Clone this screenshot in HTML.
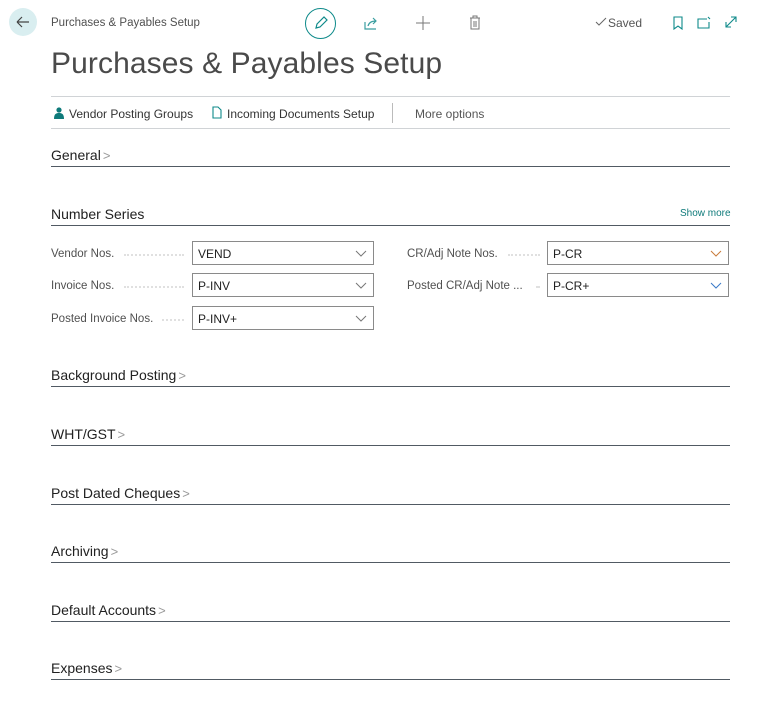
<!DOCTYPE html>
<html><head><style>
*{margin:0;padding:0;box-sizing:border-box}
body{width:781px;height:714px;background:#fff;font-family:"Liberation Sans","DejaVu Sans",sans-serif;color:#212121;position:relative;overflow:hidden}
.a{position:absolute}
.back{left:9px;top:8px;width:28px;height:28px;border-radius:50%;background:#d9eef0}
.crumb{left:51px;top:17px;font-size:11.5px;color:#505050}
.title{left:51px;top:47px;font-size:30px;font-weight:300;color:#4a4a4a;letter-spacing:0.1px}
.hl{left:51px;width:679px;height:1px;background:#d0d3d6}
.act{top:107px;font-size:12px;color:#333}
.sec{left:51px;width:679px;border-bottom:1px solid #515a63;font-size:14px;color:#212121;height:24px;padding-top:4px}
.sec span.ch{color:#999;font-size:13px;margin-left:2px}
.lbl{font-size:11.5px;color:#505050}
.dots{border-bottom:2px dotted #e0e0e0;height:1px}
.box{width:182px;height:24px;border:1px solid #8a8a8a;font-size:12px;color:#212121;padding:5px 0 0 5px}
.box svg{position:absolute;right:6px;top:8px}
</style></head><body>
<div class="a back"><svg width="28" height="28"><path d="M8 14h12M8 14l5-5M8 14l5 5" stroke="#444" stroke-width="1.2" fill="none"/></svg></div>
<div class="a crumb">Purchases &amp; Payables Setup</div>
<div class="a" style="left:305px;top:8px;width:31px;height:31px;border:1.3px solid #0e8a8a;border-radius:50%"><svg width="29" height="29"><path d="M10 19l1-4 7-7 3 3-7 7z" stroke="#0e8a8a" stroke-width="1.2" fill="none"/></svg></div>
<svg class="a" style="left:363px;top:15px" width="16" height="16"><path d="M2 7v7h11M5 11c1-4 4-5 8-5M10 3l3 3-3 3" stroke="#3a9ea0" stroke-width="1.2" fill="none"/></svg>
<svg class="a" style="left:416px;top:16px" width="14" height="14"><path d="M7 0v14M0 7h14" stroke="#777" stroke-width="1"/></svg>
<svg class="a" style="left:469px;top:15px" width="12" height="15"><path d="M1 3h10M4 3V1h4v2M2 3v11h8V3M5 6v6M7 6v6" stroke="#777" stroke-width="1" fill="none"/></svg>
<svg class="a" style="left:595px;top:17px" width="12" height="10"><path d="M1 5l3 3 7-7" stroke="#666" stroke-width="1" fill="none"/></svg>
<div class="a" style="left:608px;top:16px;font-size:12px;color:#555">Saved</div>
<svg class="a" style="left:672px;top:16px" width="12" height="14"><path d="M2 1h8v12l-4-3-4 3z" stroke="#0e8a8a" stroke-width="1.1" fill="none"/></svg>
<svg class="a" style="left:697px;top:16px" width="15" height="13"><path d="M10 3H1v9h11V6M11 1l2 2" stroke="#0e8a8a" stroke-width="1.1" fill="none"/></svg>
<svg class="a" style="left:724px;top:15px" width="14" height="14"><path d="M2 12L12 2M2 7v5h5M12 7V2H7" stroke="#0e8a8a" stroke-width="1.1" fill="none"/></svg>
<div class="a title">Purchases &amp; Payables Setup</div>
<div class="a hl" style="top:96px"></div>
<div class="a hl" style="top:128px"></div>
<svg class="a" style="left:54px;top:107px" width="10" height="12"><circle cx="5" cy="3" r="2.6" fill="#0e7a7a"/><path d="M0 12c0-5 2-6 5-6s5 1 5 6z" fill="#0e7a7a"/></svg>
<div class="a act" style="left:69px">Vendor Posting Groups</div>
<svg class="a" style="left:212px;top:106px" width="10" height="13"><path d="M1 1h5l3 3v8H1z" stroke="#0e8a8a" stroke-width="1.1" fill="none"/></svg>
<div class="a act" style="left:227px">Incoming Documents Setup</div>
<div class="a" style="left:392px;top:103px;width:1px;height:20px;background:#bbb"></div>
<div class="a act" style="left:415px;color:#555">More options</div>

<div class="a sec" style="top:143px">General<span class="ch">&gt;</span></div>
<div class="a sec" style="top:202px">Number Series</div>
<div class="a" style="left:680px;top:208px;font-size:10px;color:#0e7a7a">Show more</div>

<div class="a lbl" style="left:51px;top:248px">Vendor Nos.</div><div class="a dots" style="left:124px;top:254px;width:60px"></div>
<div class="a box" style="left:192px;top:241px">VEND<svg width="12" height="7"><path d="M1 1l5 5 5-5" stroke="#777" fill="none"/></svg></div>
<div class="a lbl" style="left:51px;top:280px">Invoice Nos.</div><div class="a dots" style="left:124px;top:286px;width:60px"></div>
<div class="a box" style="left:192px;top:273px">P-INV<svg width="12" height="7"><path d="M1 1l5 5 5-5" stroke="#777" fill="none"/></svg></div>
<div class="a lbl" style="left:51px;top:313px">Posted Invoice Nos.</div><div class="a dots" style="left:162px;top:319px;width:22px"></div>
<div class="a box" style="left:192px;top:306px">P-INV+<svg width="12" height="7"><path d="M1 1l5 5 5-5" stroke="#777" fill="none"/></svg></div>
<div class="a lbl" style="left:407px;top:248px">CR/Adj Note Nos.</div><div class="a dots" style="left:508px;top:254px;width:32px"></div>
<div class="a box" style="left:547px;top:241px">P-CR<svg width="12" height="7"><path d="M1 1l5 5 5-5" stroke="#c87a3a" fill="none"/></svg></div>
<div class="a lbl" style="left:407px;top:280px">Posted CR/Adj Note ...</div><div class="a dots" style="left:536px;top:286px;width:4px"></div>
<div class="a box" style="left:547px;top:273px">P-CR+<svg width="12" height="7"><path d="M1 1l5 5 5-5" stroke="#3a7ac8" fill="none"/></svg></div>

<div class="a sec" style="top:363px">Background Posting<span class="ch">&gt;</span></div>
<div class="a sec" style="top:422px">WHT/GST<span class="ch">&gt;</span></div>
<div class="a sec" style="top:481px">Post Dated Cheques<span class="ch">&gt;</span></div>
<div class="a sec" style="top:539px">Archiving<span class="ch">&gt;</span></div>
<div class="a sec" style="top:598px">Default Accounts<span class="ch">&gt;</span></div>
<div class="a sec" style="top:656px">Expenses<span class="ch">&gt;</span></div>
</body></html>
